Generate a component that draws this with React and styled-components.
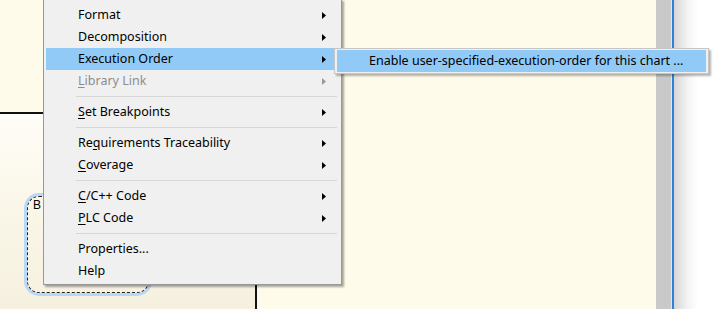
import React from 'react';
import styled, { createGlobalStyle } from 'styled-components';

const GlobalStyle = createGlobalStyle`
  html, body {
    margin: 0;
    padding: 0;
    overflow: hidden;
    background: #ffffff;
  }
  *, *::before, *::after {
    box-sizing: border-box;
  }
`;

const menuFont = `"Noto Sans", "Open Sans", "Liberation Sans", sans-serif`;

const groups = [
  [
    { label: 'Format', sub: true },
    { label: 'Decomposition', sub: true },
    { label: 'Execution Order', sub: true, active: true },
    { label: 'Library Link', key: 'L', sub: true, disabled: true },
  ],
  [{ label: 'Set Breakpoints', key: 'S', sub: true }],
  [
    { label: 'Requirements Traceability', key: 'q', sub: true },
    { label: 'Coverage', key: 'C', sub: true },
  ],
  [
    { label: 'C/C++ Code', key: 'C', sub: true },
    { label: 'PLC Code', key: 'P', sub: true },
  ],
  [{ label: 'Properties...' }, { label: 'Help' }],
];

const Mnemonic = ({ label, mark }) => {
  if (!mark) return label;
  const i = label.indexOf(mark);
  return (
    <>
      {label.slice(0, i)}
      <u>{label[i]}</u>
      {label.slice(i + 1)}
    </>
  );
};

const Arrow = ({ disabled }) => (
  <svg width="4" height="7" viewBox="0 0 4 7">
    <polygon points="0,0 4,3.5 0,7" fill={disabled ? '#9a9a9a' : '#000'} />
  </svg>
);

const App = () => (
  <>
    <GlobalStyle />
    <Screen>
      <Canvas>
        <ChartBox />
        <StateBox>
          <StateLabel>B</StateLabel>
        </StateBox>

        <Menu>
          {groups.map((items, g) => (
            <React.Fragment key={g}>
              {g > 0 && <Separator />}
              {items.map((it) => (
                <Item key={it.label} $active={it.active} $disabled={it.disabled}>
                  <Label>
                    <Mnemonic label={it.label} mark={it.key} />
                  </Label>
                  {it.sub && <Arrow disabled={it.disabled} />}
                </Item>
              ))}
            </React.Fragment>
          ))}
        </Menu>

        <SubMenu>
          <Item $active>
            <Label>Enable user-specified-execution-order for this chart ...</Label>
          </Item>
        </SubMenu>
      </Canvas>
      <ScrollTrack />
      <Splitter />
      <Shade />
    </Screen>
  </>
);

const Screen = styled.div`
  display: flex;
  width: 717px;
  height: 309px;
  overflow: hidden;
`;

const Canvas = styled.div`
  position: relative;
  flex: 0 0 656px;
  background: #fffbea;
`;

const ScrollTrack = styled.div`
  flex: 0 0 15px;
  background: #c9c9c9;
`;

const Splitter = styled.div`
  flex: 0 0 3px;
  background: #e4e4e4;
  border-right: 2px solid #2f80d8;
`;

const Shade = styled.div`
  flex: 1;
  background: linear-gradient(to right, #d6d6d6 0px, #f4f4f4 14px, #ffffff 24px);
`;

const ChartBox = styled.div`
  position: absolute;
  left: -4px;
  top: 112px;
  width: 261px;
  height: 220px;
  border-top: 2px solid #111;
  border-right: 2px solid #111;
  background: linear-gradient(to bottom, #fffdf7 0%, #faf6e8 45%, #f4efdc 100%);
`;

const StateBox = styled.div`
  position: absolute;
  left: 27px;
  top: 196px;
  width: 122px;
  height: 97px;
  border: 1px dashed #222;
  border-radius: 12px;
  box-shadow: 0 0 0 3px #b9d7f6;
`;

const StateLabel = styled.span`
  display: block;
  margin: 1px 0 0 5px;
  font: 12px "Liberation Sans", Arial, sans-serif;
  color: #000;
`;

const Menu = styled.div`
  position: absolute;
  left: 43px;
  top: -1px;
  width: 299px;
  padding: 4px 7px 2px 2px;
  background: #f0f0f0;
  border: 1px solid #979797;
  box-shadow: 2px 2px 2px rgba(0, 0, 0, 0.35);
  font-family: ${menuFont};
  font-size: 12.5px;
`;

const SubMenu = styled.div`
  position: absolute;
  left: 334px;
  top: 48px;
  width: 375px;
  padding: 1px 2px;
  background: #f0f0f0;
  border: 1px solid #c6c6c6;
  box-shadow: 2px 2px 2px rgba(0, 0, 0, 0.3);
  font-family: ${menuFont};
  font-size: 12.5px;
`;

const Item = styled.div`
  display: flex;
  align-items: center;
  justify-content: space-between;
  height: 22px;
  padding: 0 8px 0 32px;
  background: ${(p) => (p.$active ? '#91c9f7' : 'transparent')};
  color: ${(p) => (p.$disabled ? '#8d8d8d' : '#000')};
`;

const Label = styled.span`
  white-space: nowrap;
  line-height: 22px;

  u {
    text-underline-offset: 2px;
  }
`;

const Separator = styled.div`
  height: 1px;
  margin: 4px -3px 4px 30px;
  background: #d7d7d7;
`;

export default App;
